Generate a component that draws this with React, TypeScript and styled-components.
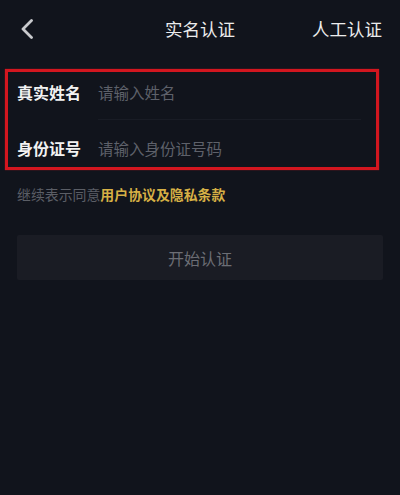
import React from "react";
import styled, { createGlobalStyle } from "styled-components";

const Global = createGlobalStyle`
  html, body {
    margin: 0;
    padding: 0;
    background: #12141c;
  }
  body {
    font-family: "Noto Sans CJK SC", "Noto Sans", sans-serif;
    -webkit-font-smoothing: antialiased;
  }
`;

const Page = styled.div`
  width: 400px;
  height: 495px;
  background: #11141c;
  display: flex;
  flex-direction: column;
  overflow: hidden;
`;

const Header = styled.header`
  height: 57px;
  display: grid;
  grid-template-columns: 1fr auto 1fr;
  align-items: center;
  padding: 0 18px;
`;

const BackButton = styled.button`
  justify-self: start;
  margin-left: 3px;
  background: none;
  border: none;
  padding: 0;
  width: 12px;
  height: 20px;
  display: flex;
  align-items: center;
  cursor: pointer;
`;

const Title = styled.h1`
  margin: 0;
  font-size: 17.5px;
  font-weight: 400;
  color: #ececec;
  line-height: 24px;
`;

const HeaderAction = styled.span`
  justify-self: end;
  font-size: 17.5px;
  color: #ececec;
  line-height: 24px;
`;

const Form = styled.section`
  position: relative;
  margin-top: 7px;
  display: flex;
  flex-direction: column;
`;

const Row = styled.label`
  display: flex;
  align-items: center;
  height: 56px;
  padding-left: 17px;
  box-sizing: border-box;
`;

const Label = styled.span`
  width: 81px;
  flex: none;
  font-size: 16px;
  font-weight: 700;
  color: #f2f2f2;
`;

const Field = styled.span<{ $divider?: boolean }>`
  flex: none;
  width: 263px;
  height: 100%;
  display: flex;
  align-items: center;
  box-sizing: border-box;
  border-bottom: 1px solid ${(p) => (p.$divider ? "#191c25" : "transparent")};
`;

const Placeholder = styled.span`
  font-size: 15.5px;
  color: #5e616a;
`;

const Highlight = styled.div`
  position: absolute;
  left: 5px;
  top: 5px;
  width: 374px;
  height: 101px;
  box-sizing: border-box;
  border: 3px solid #d3161f;
  box-shadow: 0 0 1px rgba(211, 22, 31, 0.8);
  pointer-events: none;
`;

const Agreement = styled.p`
  margin: 8px 0 0 17px;
  font-size: 13.9px;
  line-height: 20px;
  color: #5b5e66;
`;

const Link = styled.span`
  color: #d6b045;
  font-weight: 700;
`;

const StartButton = styled.button`
  margin: 31px 17px 0;
  height: 45px;
  border: none;
  border-radius: 2px;
  background: #1a1c24;
  color: #6c6e75;
  font-family: inherit;
  font-size: 16px;
  display: flex;
  align-items: center;
  justify-content: center;
`;

export default function App() {
  return (
    <>
      <Global />
      <Page>
        <Header>
          <BackButton aria-label="返回">
            <svg width="12" height="20" viewBox="0 0 12 20" fill="none">
              <path
                d="M10.5 1.5 L2 10 L10.5 18.5"
                stroke="#c9cacd"
                strokeWidth="2.8"
                strokeLinecap="round"
                strokeLinejoin="round"
              />
            </svg>
          </BackButton>
          <Title>实名认证</Title>
          <HeaderAction>人工认证</HeaderAction>
        </Header>
        <Form>
          <Row>
            <Label>真实姓名</Label>
            <Field $divider>
              <Placeholder>请输入姓名</Placeholder>
            </Field>
          </Row>
          <Row>
            <Label>身份证号</Label>
            <Field>
              <Placeholder>请输入身份证号码</Placeholder>
            </Field>
          </Row>
          <Highlight />
        </Form>
        <Agreement>
          继续表示同意<Link>用户协议及隐私条款</Link>
        </Agreement>
        <StartButton>开始认证</StartButton>
      </Page>
    </>
  );
}
